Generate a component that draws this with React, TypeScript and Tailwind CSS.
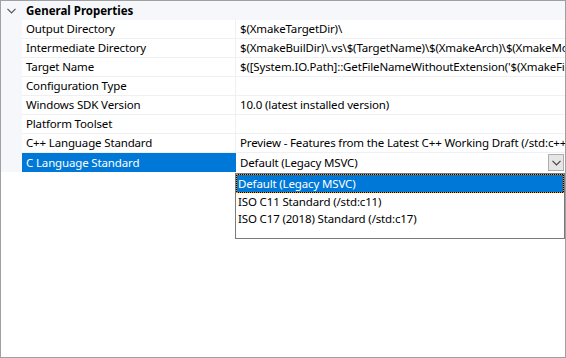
import React from "react";

const rows: [string, string][] = [
  ["Output Directory", "$(XmakeTargetDir)\\"],
  ["Intermediate Directory", "$(XmakeBuilDir)\\.vs\\$(TargetName)\\$(XmakeArch)\\$(XmakeMode)\\"],
  ["Target Name", "$([System.IO.Path]::GetFileNameWithoutExtension('$(XmakeFilename)'))"],
  ["Configuration Type", ""],
  ["Windows SDK Version", "10.0 (latest installed version)"],
  ["Platform Toolset", ""],
  ["C++ Language Standard", "Preview - Features from the Latest C++ Working Draft (/std:c++latest)"],
];

function Chevron({ className }: { className?: string }) {
  return (
    <svg width="9" height="6" viewBox="0 0 9 6" className={className}>
      <path d="M0.5 0.8 L4.5 4.8 L8.5 0.8" fill="none" stroke="currentColor" strokeWidth="1.2" />
    </svg>
  );
}

export default function App() {
  return (
    <div
      className="relative w-[566px] h-[358px] bg-white border border-[#a0a0a0] overflow-hidden text-[11.5px] tracking-[-0.15px] text-black"
      style={{ fontFamily: '"Noto Sans", "Open Sans", sans-serif' }}
    >
      <div className="flex h-[19px] bg-[#f5f7fa] items-center">
        <div className="w-[21px] shrink-0 flex justify-center text-[#555]">
          <Chevron />
        </div>
        <div className="pl-[4px] font-bold leading-[19px] tracking-normal">General Properties</div>
      </div>
      <div className="flex">
        <div className="w-[21px] shrink-0 bg-[#f5f7fa]" />
        <div className="flex-1 min-w-0 flex flex-col">
          {rows.map(([k, v]) => (
            <div key={k} className="flex h-[19px] border-b border-[#eef0f4]">
              <div className="w-[214px] shrink-0 pl-[4px] leading-[18px] whitespace-nowrap overflow-hidden border-r border-[#eef0f4]">
                {k}
              </div>
              <div className="flex-1 min-w-0 pl-[4px] leading-[18px] whitespace-nowrap overflow-hidden">{v}</div>
            </div>
          ))}
          <div className="flex h-[19px]">
            <div className="w-[214px] shrink-0 pl-[4px] leading-[19px] whitespace-nowrap bg-[#0078d7] text-white">
              C Language Standard
            </div>
            <div className="flex-1 min-w-0 flex items-center pl-[4px] pr-[1px]">
              <div className="flex-1 min-w-0 leading-[19px] whitespace-nowrap overflow-hidden">Default (Legacy MSVC)</div>
              <div className="w-[16px] h-[17px] shrink-0 bg-[#e5e5e5] border border-[#adadad] flex items-center justify-center text-[#444]">
                <Chevron />
              </div>
            </div>
          </div>
        </div>
      </div>

      <div className="absolute left-[234px] top-[172px] w-[330px] h-[66px] bg-white border border-[#7a7a7a] flex flex-col">
        <div className="h-[19px] border border-dotted border-[#ff8c00] bg-black">
          <div className="h-full bg-[#0078d7] text-white pl-[1px] leading-[17px] whitespace-nowrap">
            Default (Legacy MSVC)
          </div>
        </div>
        <div className="h-[17px] pl-[2px] leading-[17px] whitespace-nowrap">ISO C11 Standard (/std:c11)</div>
        <div className="h-[17px] pl-[2px] leading-[17px] whitespace-nowrap">ISO C17 (2018) Standard (/std:c17)</div>
      </div>
    </div>
  );
}
